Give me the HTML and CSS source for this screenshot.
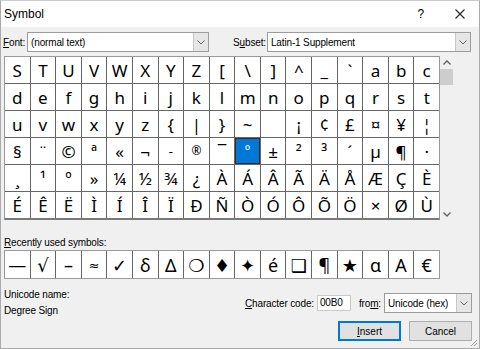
FILE: index.html
```html
<!DOCTYPE html>
<html lang="en">
<head>
  <meta charset="UTF-8">
  <title>Symbol</title>
  <link rel="stylesheet" href="styles.css">
</head>
<body>
<div class="dialog">
  <div class="titlebar">
    <span class="title">Symbol</span>
    <div class="title-btns">
      <span class="help">?</span>
      <svg class="close" width="10" height="10" viewBox="0 0 10 10"><path d="M0.5 0.5L9.5 9.5M9.5 0.5L0.5 9.5" stroke="#222" stroke-width="1.1" fill="none"/></svg>
    </div>
  </div>

  <div class="content">
    <div class="font-row">
      <label class="lbl font-lbl"><u>F</u>ont:</label>
      <div class="combo font-combo">
        <span class="combo-text">(normal text)</span>
        <span class="drop"><svg width="8" height="5" viewBox="0 0 8 5"><path d="M0.5 0.5L4 4L7.5 0.5" stroke="#666" fill="none"/></svg></span>
      </div>
      <label class="lbl subset-lbl">S<u>u</u>bset:</label>
      <div class="combo subset-combo">
        <span class="combo-text">Latin-1 Supplement</span>
        <span class="drop"><svg width="8" height="5" viewBox="0 0 8 5"><path d="M0.5 0.5L4 4L7.5 0.5" stroke="#666" fill="none"/></svg></span>
      </div>
    </div>

    <div class="chars">
      <div class="grid main-grid">
        <span>S</span><span>T</span><span>U</span><span>V</span><span>W</span><span>X</span><span>Y</span><span>Z</span><span>[</span><span>\</span><span>]</span><span>^</span><span>_</span><span>`</span><span>a</span><span>b</span><span>c</span>
        <span>d</span><span>e</span><span>f</span><span>g</span><span>h</span><span>i</span><span>j</span><span>k</span><span>l</span><span>m</span><span>n</span><span>o</span><span>p</span><span>q</span><span>r</span><span>s</span><span>t</span>
        <span>u</span><span>v</span><span>w</span><span>x</span><span>y</span><span>z</span><span>{</span><span>|</span><span>}</span><span>~</span><span>&nbsp;</span><span>¡</span><span>¢</span><span>£</span><span>¤</span><span>¥</span><span>¦</span>
        <span>§</span><span>¨</span><span>©</span><span>ª</span><span>«</span><span>¬</span><span class="shy">-</span><span class="sm">®</span><span>¯</span><span class="selected">°</span><span>±</span><span>²</span><span>³</span><span>´</span><span>µ</span><span>¶</span><span>·</span>
        <span>¸</span><span>¹</span><span>º</span><span>»</span><span>¼</span><span>½</span><span>¾</span><span>¿</span><span>À</span><span>Á</span><span>Â</span><span>Ã</span><span>Ä</span><span>Å</span><span>Æ</span><span>Ç</span><span>È</span>
        <span>É</span><span>Ê</span><span>Ë</span><span>Ì</span><span>Í</span><span>Î</span><span>Ï</span><span>Ð</span><span>Ñ</span><span>Ò</span><span>Ó</span><span>Ô</span><span>Õ</span><span>Ö</span><span>×</span><span>Ø</span><span>Ù</span>
      </div>
      <div class="scroll">
        <svg width="8" height="5" viewBox="0 0 8 5"><path d="M0.5 4.5L4 1L7.5 4.5" stroke="#606060" stroke-width="1.3" fill="none"/></svg>
        <div class="thumb"></div>
        <div class="track"></div>
        <svg width="8" height="5" viewBox="0 0 8 5"><path d="M0.5 0.5L4 4L7.5 0.5" stroke="#606060" stroke-width="1.3" fill="none"/></svg>
      </div>
    </div>

    <div class="recent-lbl"><u>R</u>ecently used symbols:</div>
    <div class="grid recent">
      <span>—</span><span>√</span><span>–</span><span class="small">≈</span><span>✓</span><span>δ</span><span>Δ</span><span>❍</span><span>♦</span><span>✦</span><span>é</span><span>❑</span><span>¶</span><span>★</span><span>α</span><span>A</span><span>€</span>
    </div>

    <div class="bottom">
      <div class="uname">
        <div>Unicode name:</div>
        <div>Degree Sign</div>
      </div>
      <div class="actions">
        <div class="code-row">
          <label class="lbl code-lbl"><u>C</u>haracter code:</label>
          <div class="code-input">00B0</div>
          <label class="lbl from-lbl">fro<u>m</u>:</label>
          <div class="combo from-combo">
            <span class="combo-text">Unicode (hex)</span>
            <span class="drop"><svg width="8" height="5" viewBox="0 0 8 5"><path d="M0.5 0.5L4 4L7.5 0.5" stroke="#666" fill="none"/></svg></span>
          </div>
        </div>
        <div class="btn-row">
          <button type="button" class="btn default"><u>I</u>nsert</button>
          <button type="button" class="btn">Cancel</button>
        </div>
      </div>
    </div>
  </div>

  <svg class="grip" width="10" height="10" viewBox="0 0 10 10"><path d="M9 3L3 9M9 6L6 9" stroke="#999" stroke-width="1"/></svg>
</div>
</body>
</html>
```

FILE: styles.css
```css
* { box-sizing: border-box; }
body { margin: 0; font-family: "Liberation Sans", Arial, sans-serif; font-size: 10px; letter-spacing: -0.15px; color: #000; background: #fff; }
u { text-decoration: underline; text-underline-offset: 1px; }

.dialog { position: relative; width: 480px; height: 349px; background: #f0f0f0; border: 1px solid #aaa; border-top-color: #ccc; }

.titlebar { height: 26px; background: #fff; display: flex; align-items: center; justify-content: space-between; padding: 0 14px 0 3px; }
.title { font-size: 12px; letter-spacing: 0; }
.title-btns { display: flex; align-items: center; gap: 31px; }
.help { font-size: 12px; }

.content { padding: 5px 7px 0 2px; }

.font-row { display: flex; align-items: center; height: 20px; }
.lbl { white-space: nowrap; flex-shrink: 0; }
.font-lbl { margin-right: 2px; }
.subset-lbl { margin-left: 24px; margin-right: 1px; }
.combo { height: 20px; background: #fff; border: 1px solid #9c9c9c; display: flex; align-items: center; justify-content: space-between; padding-left: 3px; flex-shrink: 0; }
.combo-text { white-space: nowrap; overflow: hidden; }
.font-combo { width: 182px; }
.subset-combo { width: 204px; }
.drop { width: 15px; height: 18px; background: #e6e6e6; border-left: 1px solid #c8c8c8; display: flex; align-items: center; justify-content: center; }

.chars { display: flex; margin-top: 4px; padding-left: 1px; }
.grid { display: grid; grid-template-columns: repeat(17, 1fr); gap: 1px; background: #666; border: 1px solid #9a9a9a; width: 436px; letter-spacing: 0; }
.grid span { background: #fff; display: flex; align-items: center; justify-content: center; font-family: "Noto Sans", "DejaVu Sans", sans-serif; font-size: 17px; }
.main-grid { grid-auto-rows: 26px; border-bottom: 2px solid #7a7a7a; }
.main-grid .selected { background: #0078d7; color: #fff; box-shadow: inset 0 0 0 1px #3a2a20; font-size: 14px; align-items: flex-start; padding-top: 3px; }
.main-grid .shy { font-size: 13px; }
.main-grid .sm { font-size: 12px; align-items: flex-start; padding-top: 4px; }

.scroll { width: 13px; display: flex; flex-direction: column; align-items: center; padding: 4px 0 3px; }
.thumb { width: 13px; height: 16px; background: #cdcdcd; margin-top: 4px; }
.track { flex: 1; }

.recent-lbl { height: 14px; line-height: 14px; margin-top: 16px; padding-left: 1px; }
.recent { grid-auto-rows: 27px; margin-left: 1px; }
.recent span { font-size: 18px; }
.recent .small { font-size: 13px; }

.bottom { display: flex; justify-content: space-between; margin-top: 8px; }
.uname { line-height: 16px; padding-left: 1px; }
.actions { display: flex; flex-direction: column; align-items: flex-end; margin-top: 6px; }
.code-row { display: flex; align-items: center; height: 20px; }
.code-lbl { margin-right: 3px; }
.code-input { width: 34px; height: 16px; background: #fff; border: 1px solid #c9c9c9; padding-left: 2px; line-height: 14px; }
.from-lbl { margin-left: 8px; margin-right: 3px; }
.from-combo { width: 88px; }
.btn-row { display: flex; gap: 8px; margin-top: 8px; }
.btn { height: 20px; width: 63px; font-family: "Liberation Sans", Arial, sans-serif; font-size: 10px; background: #e1e1e1; border: 1px solid #adadad; padding: 0; color: #000; }
.btn.default { border: 2px solid #0078d7; }

.grip { position: absolute; right: 1px; bottom: 1px; }
```
